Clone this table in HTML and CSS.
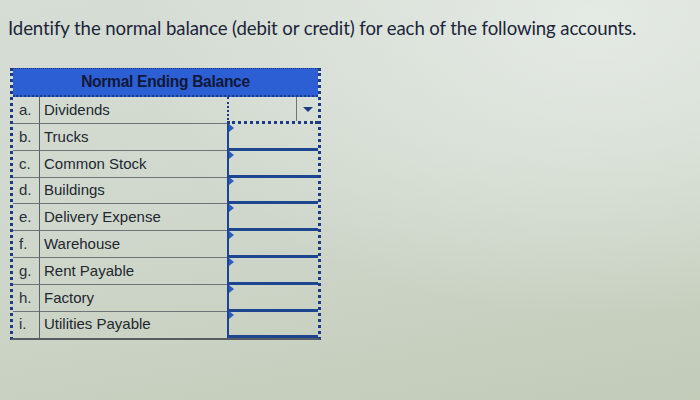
FILE: index.html
```html
<!DOCTYPE html>
<html>
<head>
<meta charset="utf-8">
<link rel="stylesheet" href="styles.css">
</head>
<body>
<div class="page">
  <p class="prompt">Identify the normal balance (debit or credit) for each of the following accounts.</p>
  <div class="sheet">
    <div class="head">Normal Ending Balance</div>
    <div class="row">
      <div class="let">a.</div><div class="name">Dividends</div>
      <div class="select"><span class="sel-val"></span><span class="sel-btn"><span class="arrow"></span></span></div>
    </div>
    <div class="row">
      <div class="let">b.</div><div class="name">Trucks</div><div class="inp first"><span class="flag"></span></div>
    </div>
    <div class="row">
      <div class="let">c.</div><div class="name">Common Stock</div><div class="inp"><span class="flag"></span></div>
    </div>
    <div class="row">
      <div class="let">d.</div><div class="name">Buildings</div><div class="inp"><span class="flag"></span></div>
    </div>
    <div class="row">
      <div class="let">e.</div><div class="name">Delivery Expense</div><div class="inp"><span class="flag"></span></div>
    </div>
    <div class="row">
      <div class="let">f.</div><div class="name">Warehouse</div><div class="inp"><span class="flag"></span></div>
    </div>
    <div class="row">
      <div class="let">g.</div><div class="name">Rent Payable</div><div class="inp"><span class="flag"></span></div>
    </div>
    <div class="row">
      <div class="let">h.</div><div class="name">Factory</div><div class="inp"><span class="flag"></span></div>
    </div>
    <div class="row last">
      <div class="let">i.</div><div class="name">Utilities Payable</div><div class="inp"><span class="flag"></span></div>
    </div>
  </div>
</div>
</body>
</html>
```
FILE: styles.css
```css
html, body {
  margin: 0;
  height: 100%;
}
body {
  background:
    radial-gradient(ellipse at 85% 5%, rgba(230,236,230,0.9), rgba(230,236,230,0) 55%),
    linear-gradient(170deg, #d6ddd5 0%, #d0d8cd 45%, #c2cbb8 100%);
  font-family: "Liberation Sans", Arial, sans-serif;
  color: #262b33;
}
.page {
  padding: 17px 0 0 8px;
}
.prompt {
  margin: 0;
  font-family: "Lato", "Liberation Sans", sans-serif;
  font-size: 18.6px;
  line-height: 22px;
  color: #20253a;
  letter-spacing: -0.1px;
}
.sheet {
  margin: 29px 0 0 2px;
  width: 305px;
  border-left: 3px dotted #1c3a86;
  border-right: 3px dotted #1c3a86;
  border-bottom: 2px solid #555d62;
}
.head {
  height: 26px;
  background: #2c5fd4;
  border-top: 1px dotted #1c3a86;
  border-bottom: 2px dotted #1c3a86;
  font-weight: bold;
  font-size: 15.6px;
  line-height: 26px;
  text-align: center;
  color: #121838;
  letter-spacing: -0.3px;
}
.row {
  display: grid;
  grid-template-columns: 27px 187px 1fr;
  height: 26.8px;
}
.let {
  border-right: 1px solid #5a6066;
  border-bottom: 1px solid #6e7478;
  padding-left: 6px;
  font-size: 15px;
  line-height: 26px;
  color: #2b3038;
}
.name {
  border-bottom: 1px solid #6e7478;
  padding-left: 4px;
  font-size: 15px;
  line-height: 26px;
  color: #22272f;
}
.row.last .let, .row.last .name {
  border-bottom: none;
}
.select {
  display: flex;
  border-left: 2px dotted #1c3a86;
  border-bottom: 3px dotted #1c3a86;
}
.sel-val {
  flex: 1;
  border-right: 1px solid #6e7478;
}
.sel-btn {
  width: 21px;
  display: flex;
  align-items: center;
  justify-content: center;
}
.arrow {
  width: 0;
  height: 0;
  border-left: 5px solid transparent;
  border-right: 5px solid transparent;
  border-top: 5px solid #1c3a86;
}
.inp {
  position: relative;
  border-left: 2px solid #1d4590;
  border-bottom: 3px solid #1d4590;
  box-sizing: border-box;
}
.flag {
  position: absolute;
  left: 0;
  top: 0;
  width: 0;
  height: 0;
  border-top: 4px solid transparent;
  border-bottom: 4px solid transparent;
  border-left: 5px solid #2b5cc4;
}
```
